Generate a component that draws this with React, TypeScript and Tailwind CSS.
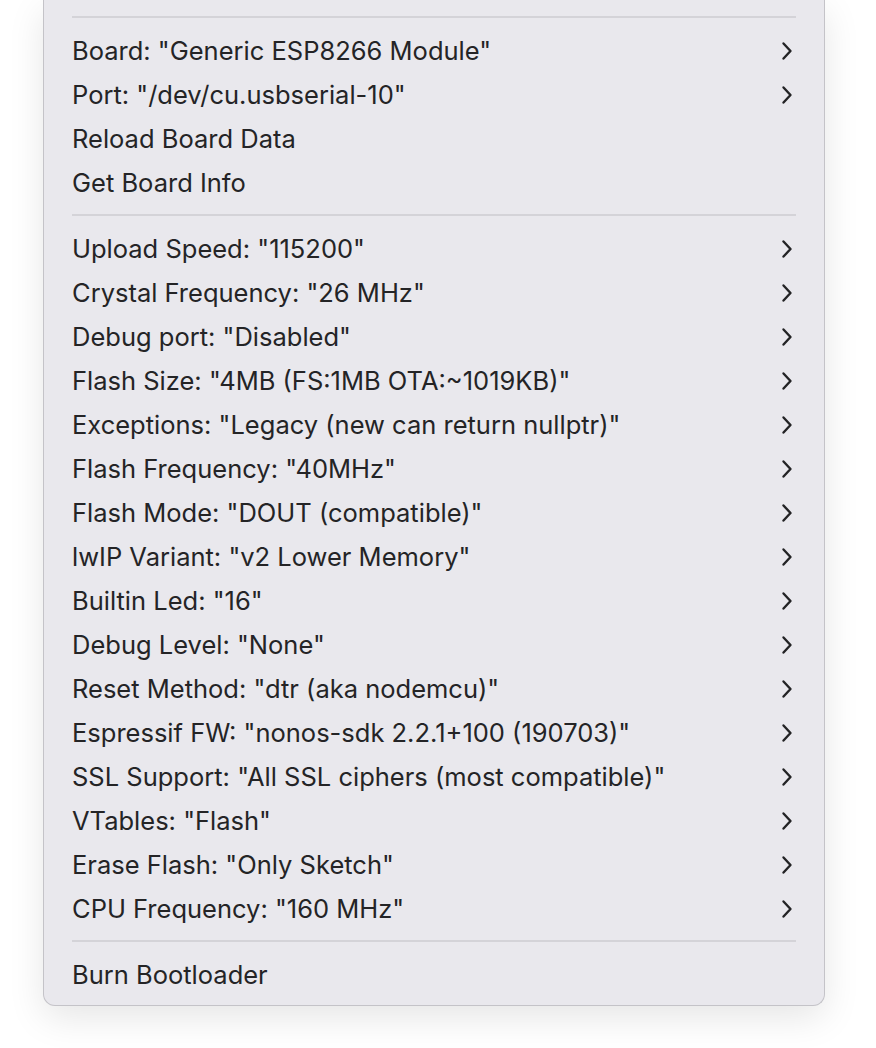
import { Fragment } from "react";

type Item = { label: string; submenu?: boolean };

const groups: Item[][] = [
  [
    { label: 'Board: "Generic ESP8266 Module"', submenu: true },
    { label: 'Port: "/dev/cu.usbserial-10"', submenu: true },
    { label: "Reload Board Data" },
    { label: "Get Board Info" },
  ],
  [
    { label: 'Upload Speed: "115200"', submenu: true },
    { label: 'Crystal Frequency: "26 MHz"', submenu: true },
    { label: 'Debug port: "Disabled"', submenu: true },
    { label: 'Flash Size: "4MB (FS:1MB OTA:~1019KB)"', submenu: true },
    { label: 'Exceptions: "Legacy (new can return nullptr)"', submenu: true },
    { label: 'Flash Frequency: "40MHz"', submenu: true },
    { label: 'Flash Mode: "DOUT (compatible)"', submenu: true },
    { label: 'lwIP Variant: "v2 Lower Memory"', submenu: true },
    { label: 'Builtin Led: "16"', submenu: true },
    { label: 'Debug Level: "None"', submenu: true },
    { label: 'Reset Method: "dtr (aka nodemcu)"', submenu: true },
    { label: 'Espressif FW: "nonos-sdk 2.2.1+100 (190703)"', submenu: true },
    { label: 'SSL Support: "All SSL ciphers (most compatible)"', submenu: true },
    { label: 'VTables: "Flash"', submenu: true },
    { label: 'Erase Flash: "Only Sketch"', submenu: true },
    { label: 'CPU Frequency: "160 MHz"', submenu: true },
  ],
  [{ label: "Burn Bootloader" }],
];

function Chevron() {
  return (
    <svg width="12" height="20" viewBox="0 0 12 20" fill="none" className="mr-[3px] mt-[1px]">
      <path
        d="M2.5 2.5 L9.5 10 L2.5 17.5"
        stroke="#232325"
        strokeWidth="2.4"
        strokeLinecap="round"
        strokeLinejoin="round"
      />
    </svg>
  );
}

function Separator() {
  return (
    <div className="flex h-[22px] items-center">
      <div className="h-[2px] w-full bg-[#d4d3d8]" />
    </div>
  );
}

export default function App() {
  return (
    <div className="min-h-[1048px] bg-white pl-[43px] pr-[51px]">
      <div
        className="rounded-b-[12px] border-x border-b border-[#c4c3c8] bg-[#e9e8ed] px-[28px] pt-[6px] pb-[9px] shadow-[0_12px_36px_rgba(0,0,0,0.10)]"
        style={{ fontFamily: "Inter, 'Noto Sans', sans-serif" }}
      >
        {groups.map((group, gi) => (
          <Fragment key={gi}>
            <Separator />
            {group.map((item) => (
              <div
                key={item.label}
                className="flex h-[44px] items-center justify-between text-[25.5px] leading-none text-[#242426]"
              >
                <span className="mt-[1px]">{item.label}</span>
                {item.submenu ? <Chevron /> : null}
              </div>
            ))}
          </Fragment>
        ))}
      </div>
    </div>
  );
}
